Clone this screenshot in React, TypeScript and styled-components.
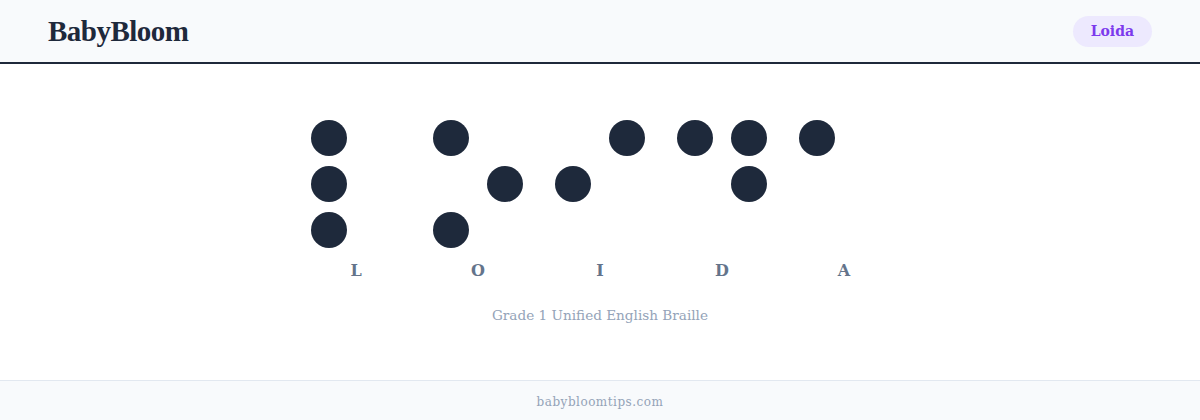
import styled, { createGlobalStyle } from 'styled-components';

const GlobalStyle = createGlobalStyle`
  * { box-sizing: border-box; }
  html, body { margin: 0; padding: 0; }
  body {
    font-family: "DejaVu Serif", "Liberation Serif", serif;
    background: #ffffff;
    color: #1e293b;
  }
`;

const Page = styled.div`
  display: flex;
  flex-direction: column;
  min-height: 100vh;
`;

const Header = styled.header`
  height: 64px;
  display: flex;
  align-items: center;
  justify-content: space-between;
  padding: 0 48px;
  background: #f8fafc;
  border-bottom: 2px solid #1e293b;
`;

const Logo = styled.div`
  font-family: "Liberation Serif", "DejaVu Serif", serif;
  font-weight: 700;
  font-size: 29px;
  letter-spacing: -0.5px;
  color: #1e293b;
`;

const UserPill = styled.div`
  height: 31px;
  padding: 0 18px;
  display: flex;
  align-items: center;
  border-radius: 16px;
  background: #ede9fe;
  color: #7c3aed;
  font-size: 14px;
  font-weight: 700;
`;

const Main = styled.main`
  flex: 1;
  display: flex;
  flex-direction: column;
  align-items: center;
  padding-top: 56px;
`;

const Word = styled.div`
  display: flex;
  gap: 32px;
`;

const Cell = styled.div`
  display: flex;
  flex-direction: column;
  align-items: center;
`;

const DotGrid = styled.div`
  display: grid;
  grid-template-columns: 36px 36px;
  grid-template-rows: 36px 36px 36px;
  column-gap: 18px;
  row-gap: 10px;
`;

const Dot = styled.span<{ $on: boolean }>`
  width: 36px;
  height: 36px;
  border-radius: 50%;
  background: ${({ $on }) => ($on ? '#1e293b' : 'transparent')};
`;

const Letter = styled.div`
  margin-top: 13px;
  height: 20px;
  line-height: 20px;
  font-size: 16px;
  font-weight: 700;
  color: #64748b;
`;

const Caption = styled.div`
  margin-top: 24px;
  line-height: 20px;
  font-size: 13.6px;
  color: #94a3b8;
`;

const Footer = styled.footer`
  height: 40px;
  display: flex;
  align-items: center;
  justify-content: center;
  padding-top: 2px;
  background: #f8fafc;
  border-top: 1px solid #e2e8f0;
  font-size: 12px;
  letter-spacing: 0.5px;
  color: #94a3b8;
`;

// dot numbers per letter (1-3 left column, 4-6 right column)
const letters: { char: string; dots: number[] }[] = [
  { char: 'L', dots: [1, 2, 3] },
  { char: 'O', dots: [1, 3, 5] },
  { char: 'I', dots: [2, 4] },
  { char: 'D', dots: [1, 4, 5] },
  { char: 'A', dots: [1] },
];

// grid order: row by row, left then right
const gridOrder = [1, 4, 2, 5, 3, 6];

const App = () => {
  return (
    <Page>
      <GlobalStyle />
      <Header>
        <Logo>BabyBloom</Logo>
        <UserPill>Loida</UserPill>
      </Header>
      <Main>
        <Word>
          {letters.map((l) => (
            <Cell key={l.char}>
              <DotGrid>
                {gridOrder.map((n) => (
                  <Dot key={n} $on={l.dots.includes(n)} />
                ))}
              </DotGrid>
              <Letter>{l.char}</Letter>
            </Cell>
          ))}
        </Word>
        <Caption>Grade 1 Unified English Braille</Caption>
      </Main>
      <Footer>babybloomtips.com</Footer>
    </Page>
  );
};

export default App;
